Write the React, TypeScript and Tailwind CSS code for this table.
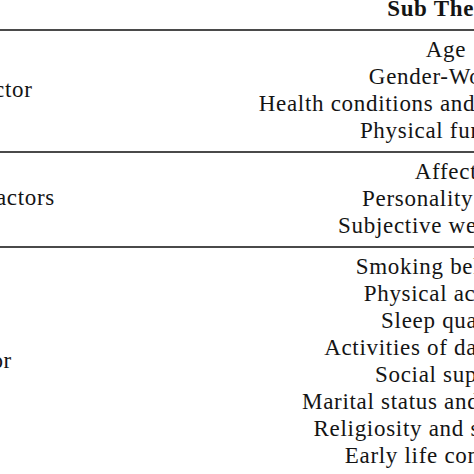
import React from "react";

const rows = [
  {
    theme: "Biological factor",
    subs: ["Age", "Gender-Women", "Health conditions and chronic disease", "Physical function"],
  },
  {
    theme: "Psychological factors",
    subs: ["Affect", "Personality traits", "Subjective well-being"],
  },
  {
    theme: "Social factor",
    subs: [
      "Smoking behavior",
      "Physical activity",
      "Sleep quality",
      "Activities of daily living",
      "Social support",
      "Marital status and family life",
      "Religiosity and spirituality",
      "Early life conditions",
    ],
  },
];

export default function App() {
  return (
    <div
      className="w-[474px] h-[474px] overflow-hidden bg-white text-[#141414] text-[23px] tracking-[0.7px]"
      style={{ fontFamily: '"Liberation Serif", "Times New Roman", serif' }}
    >
      {/* table is wider than the view, cropped on both sides */}
      <div className="ml-[-352px] w-[994px]">
        <div className="grid grid-cols-[602px_392px] h-[31px] border-b-2 border-[#4a4a4a]">
          <div className="text-center font-bold leading-[18px]">Theme</div>
          <div className="text-center font-bold leading-[18px] whitespace-nowrap">Sub Theme</div>
        </div>

        {rows.map((row) => (
          <div
            key={row.theme}
            className="grid grid-cols-[602px_392px] border-b-2 border-[#4a4a4a] pt-[5px] pb-[7px]"
          >
            <div className="flex items-center justify-center whitespace-nowrap">{row.theme}</div>
            <div className="flex flex-col items-center">
              {row.subs.map((s) => (
                <div key={s} className="leading-[27px] whitespace-nowrap">
                  {s}
                </div>
              ))}
            </div>
          </div>
        ))}
      </div>
    </div>
  );
}
